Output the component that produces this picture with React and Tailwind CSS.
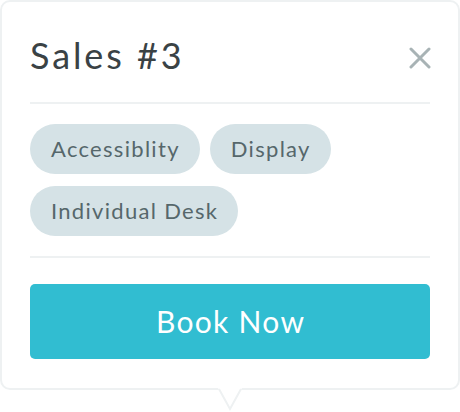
import React from "react";

function Tag({ children }) {
  return (
    <span className="flex h-[50px] items-center rounded-full bg-[#d5e2e6] pl-[21px] pr-[20px] text-[22px] leading-[26px] tracking-[1.3px] text-[#56676b]">
      {children}
    </span>
  );
}

export default function App() {
  return (
    <div className="relative h-[412px] w-[460px] bg-white" style={{ fontFamily: "Lato, 'Open Sans', sans-serif" }}>
      <div className="relative w-[460px] rounded-[10px] border-2 border-[#eef1f2] bg-white px-[28px] pb-[29px] pt-[31px]">
        <div className="flex items-start justify-between">
          <h1 className="text-[36px] leading-[44px] tracking-[2.9px] text-[#3a4245]">Sales #3</h1>
          <button className="mr-[-2px] mt-[13px] flex h-[24px] w-[24px] items-center justify-center text-[#a8b3b5]" aria-label="Close">
            <svg width="22" height="22" viewBox="0 0 22 22" fill="none" stroke="currentColor" strokeWidth="3" strokeLinecap="round">
              <path d="M2 2 L20 20 M20 2 L2 20" />
            </svg>
          </button>
        </div>
        <div className="mt-[25px] h-[2px] bg-[#eef1f2]" />
        <div className="mt-[20px] flex flex-wrap gap-x-[10px] gap-y-[12px]">
          <Tag>Accessiblity</Tag>
          <Tag>Display</Tag>
          <Tag>Individual Desk</Tag>
        </div>
        <div className="mt-[20px] h-[2px] bg-[#eef1f2]" />
        <button className="mt-[26px] flex h-[75px] w-full items-center justify-center rounded-[5px] bg-[#31bdd1] pl-[1.3px] text-[30px] tracking-[1.3px] text-white">
          Book Now
        </button>
      </div>
      <svg className="absolute left-[218px] top-[388px]" width="24" height="24" viewBox="0 0 24 24">
        <polygon points="0,0 12,21 24,0" fill="white" />
        <path d="M1 1 L12 21 L23 1" fill="none" stroke="#eef1f2" strokeWidth="2" />
      </svg>
    </div>
  );
}
